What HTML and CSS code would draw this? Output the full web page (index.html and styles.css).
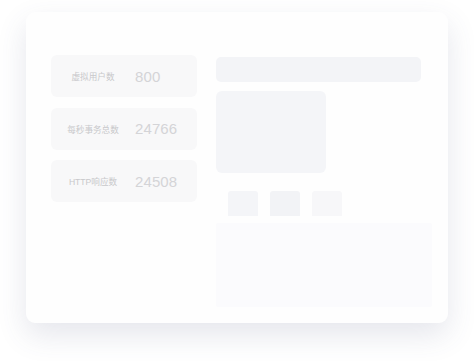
FILE: index.html
```html
<!DOCTYPE html>
<html lang="zh">
<head>
<meta charset="utf-8">
<link rel="stylesheet" href="styles.css">
</head>
<body>
<div class="card">
  <div class="stats">
    <div class="stat"><span class="label">虚拟用户数</span><span class="num">800</span></div>
    <div class="stat"><span class="label">每秒事务总数</span><span class="num">24766</span></div>
    <div class="stat"><span class="label">HTTP响应数</span><span class="num">24508</span></div>
  </div>
  <div class="right">
    <div class="bar"></div>
    <div class="box"></div>
    <div class="squares">
      <div class="sq sq1"></div>
      <div class="sq sq2"></div>
      <div class="sq sq3"></div>
    </div>
    <div class="area"></div>
  </div>
</div>
</body>
</html>
```
FILE: styles.css
```css
html, body {
  margin: 0;
  padding: 0;
  background: #ffffff;
}
body {
  font-family: "Liberation Sans", "Noto Sans CJK SC", sans-serif;
  width: 474px;
  height: 361px;
  overflow: hidden;
}
.card {
  box-sizing: border-box;
  margin: 12px 0 0 26px;
  width: 422px;
  height: 311px;
  background: #fefefe;
  border-radius: 9px;
  box-shadow: 0 12px 30px rgba(70, 80, 120, 0.14);
  padding: 43px 0 0 25px;
  display: flex;
  gap: 19px;
}
.stats {
  width: 146px;
  display: flex;
  flex-direction: column;
  gap: 10.5px;
}
.stat {
  height: 42px;
  background: #f8f8f9;
  border-radius: 6px;
  display: flex;
  align-items: center;
}
.label {
  width: 84px;
  text-align: center;
  font-size: 8.6px;
  color: #c8c8cb;
  white-space: nowrap;
}
.num {
  font-size: 15px;
  color: #d4d4d7;
  letter-spacing: 0.1px;
}
.right {
  width: 216px;
  padding-top: 2px;
  display: flex;
  flex-direction: column;
}
.bar {
  width: 205px;
  height: 25px;
  background: #f3f4f7;
  border-radius: 5px;
}
.box {
  margin-top: 9px;
  width: 110px;
  height: 82px;
  background: #f4f5f8;
  border-radius: 6px;
}
.squares {
  margin-top: 18px;
  padding-left: 12px;
  display: flex;
  gap: 12px;
}
.sq {
  width: 30px;
  height: 25px;
  border-radius: 3px 3px 0 0;
}
.sq1 { background: #f4f5f8; }
.sq2 { background: #f2f3f6; }
.sq3 { background: #f7f7f9; }
.area {
  margin-top: 7px;
  height: 84px;
  background: #fbfbfd;
  border-radius: 2px;
}
```
